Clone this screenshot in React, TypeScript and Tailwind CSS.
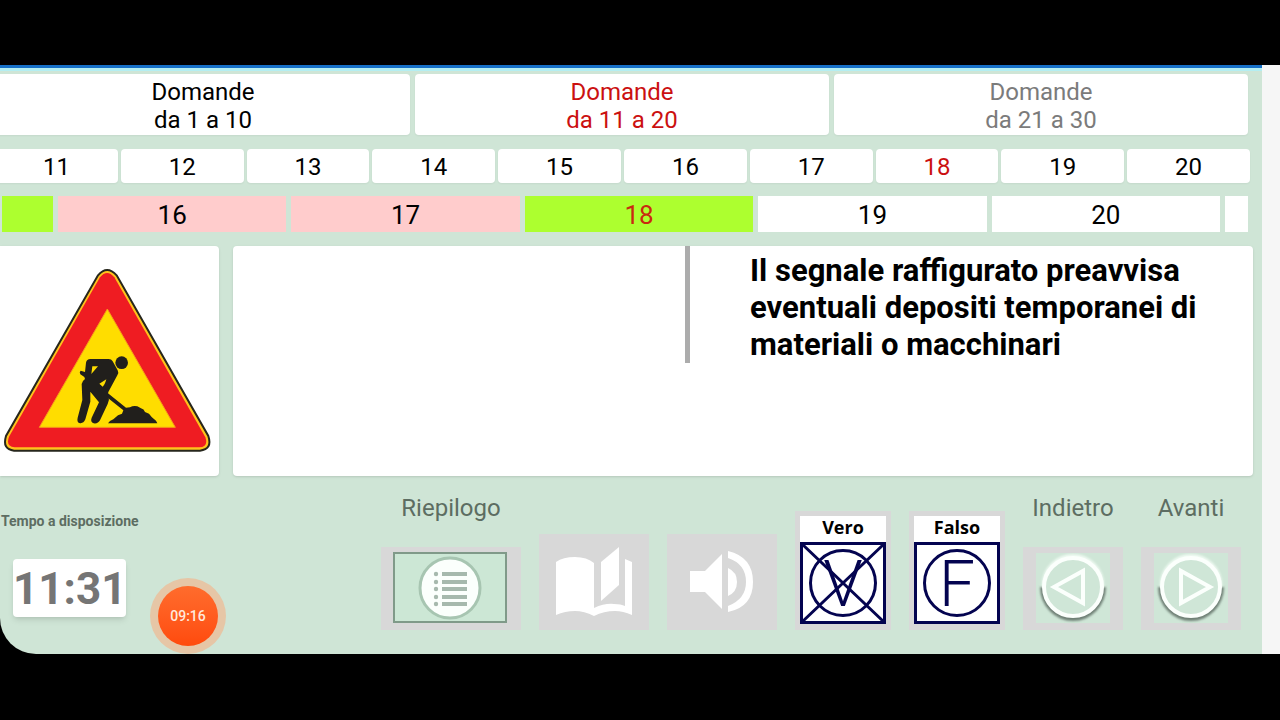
import type { ReactNode } from "react";
import clsx from "clsx";

type Tab = { from: number; to: number; tone: string };
type Strip = { n: number; tone: string };

const tabs: Tab[] = [
  { from: 1, to: 10, tone: "text-black" },
  { from: 11, to: 20, tone: "text-[#cb1010]" },
  { from: 21, to: 30, tone: "text-[#7b7b7b]" },
];

const questions = [11, 12, 13, 14, 15, 16, 17, 18, 19, 20];
const current = 18;

const strip: Strip[] = [
  { n: 16, tone: "bg-[#ffcccc] text-black" },
  { n: 17, tone: "bg-[#ffcccc] text-black" },
  { n: 18, tone: "bg-[#adff2f] text-[#c92a10]" },
  { n: 19, tone: "bg-white text-black" },
  { n: 20, tone: "bg-white text-black" },
];

function RoadWorksSign() {
  return (
    <svg viewBox="12 87 624 552" className="h-[184px] w-[208px]" role="img" aria-label="Lavori">
      <path
        d="M294 106 Q321 74 350 106 L625 588 Q638 628 600 632 H42 Q6 628 18 588 Z"
        fill="#ffc21c"
        stroke="#26261c"
        strokeWidth="6"
      />
      <path d="M300 112 Q321 86 343 112 L616 592 Q626 620 598 622 H44 Q16 620 27 590 Z" fill="#ef1c22" />
      <path d="M322 207 L526 562 H118 Z" fill="#ffdd00" stroke="#f59a1b" strokeWidth="3" />
      <g fill="#211f1c">
        <circle cx="365" cy="368" r="19" />
        <path
          fillRule="evenodd"
          d="M258 368 Q260 357 271 357 H326 Q334 357 338 364 L353 391 Q357 398 352 406 L325 456 Q322 463 326 470 Q329 480 323 492 L300 541 Q294 552 281 550 Q270 546 275 533 L297 487 L271 455 L271 485 L256 538 Q250 552 238 549 Q230 546 233 533 L247 480 L245 432 Q248 421 255 417 L253 411 L241 403 Q237 396 242 392 L255 396 Z M277 379 L274 402 L294 379 Z M298 431 L319 418 Q314 436 308 440 Z"
        />
        <path d="M324 460 L378 503 L390 502 Q400 496 412 499 L423 505 Q432 507 435 516 L447 521 Q454 532 468 542 L472 550 H324 Q328 543 340 538 L354 526 L366 521 L370 511 L320 471 Z" />
      </g>
    </svg>
  );
}

function ListIcon() {
  return (
    <svg viewBox="0 0 64 64" className="h-16 w-16" aria-hidden="true">
      <circle cx="32" cy="32" r="30" fill="#fbfffc" stroke="#a7c5b1" strokeWidth="3" />
      {[17, 25, 32, 40, 47].map((y) => (
        <g key={y} fill="#a6b9ad">
          <circle cx="18" cy={y + 1} r="2.200" />
          <rect x="24" y={y - 1} width="25" height="4" />
        </g>
      ))}
    </svg>
  );
}

function BookIcon() {
  return (
    <svg viewBox="0 0 78 70" className="h-[70px] w-[78px]" fill="#fff" aria-hidden="true">
      <path d="M1 15 Q8 10 20 10 Q32 10 39 16 V61 Q50 56 59 57 Q66 57 70 59 V12 L77 15 V68 Q68 64 60 64 Q49 64 39 69 Q29 64 20 64 Q10 64 1 68 Z" />
      <path d="M46 15 L64 0 V38 L46 54 Z" />
    </svg>
  );
}

function SpeakerIcon() {
  return (
    <svg viewBox="0 0 64 62" className="h-[62px] w-16" fill="#fff" aria-hidden="true">
      <path d="M0 20 H15 L32 3 V58 L15 41 H0 Z" />
      <path d="M38 17 Q47 21 47 31 Q47 41 38 45 Z" />
      <path d="M38 0 Q63 6 63 31 Q63 56 38 61 V55 Q56 48 56 31 Q56 13 38 7 Z" />
    </svg>
  );
}

function ArrowIcon({ back = false }: { back?: boolean }) {
  return (
    <svg viewBox="0 0 74 70" className="h-[70px] w-[74px] bg-[#cfe6d7]" aria-hidden="true">
      <defs>
        <filter id={back ? "soft-b" : "soft-f"} x="-20%" y="-20%" width="140%" height="140%">
          <feGaussianBlur stdDeviation="1.3" />
        </filter>
      </defs>
      <g filter={back ? "url(#soft-b)" : "url(#soft-f)"}>
        <circle cx="37" cy="32" r="29" fill="none" stroke="#effaf2" strokeWidth="4" />
        <path d="M4 34 A33 34 0 0 0 70 34 Z" fill="#6f8076" />
      </g>
      <circle cx="37" cy="34" r="29" fill="#cfe6d7" stroke="#fbfffc" strokeWidth="4" />
      <path
        d={back ? "M18 34 L47 18 V50 Z" : "M56 34 L27 18 V50 Z"}
        fill="none"
        stroke="#fbfffc"
        strokeWidth="4"
      />
    </svg>
  );
}

function AnswerButton({ label, letter, crossed }: { label: string; letter: string; crossed?: boolean }) {
  return (
    <button className="w-24 bg-[#d8d8d8] px-[5px] pt-[5px] pb-[6px]">
      <span className="block bg-white pb-[3px] text-center font-['Open_Sans','Noto_Sans',sans-serif] text-lg leading-[23px] font-bold text-black">
        {label}
      </span>
      <svg viewBox="0 0 86 82" className="block h-[82px] w-[86px] bg-white" aria-hidden="true">
        <g fill="none" stroke="#040450" strokeWidth="3">
          <rect x="1.500" y="1.500" width="83" height="79" />
          <circle cx="43" cy="41" r="32.500" />
          {crossed && <path d="M2 2 L84 80 M84 2 L2 80" />}
        </g>
        <text
          x="43"
          y="64"
          textAnchor="middle"
          fontSize="64"
          fill="#040450"
          className="font-['Roboto',sans-serif] font-light"
        >
          {letter}
        </text>
      </svg>
    </button>
  );
}

function Captioned({ caption, children }: { caption: string; children: ReactNode }) {
  return (
    <label className="flex flex-col items-center gap-[23px] text-2xl leading-8 text-[#5d6d62]">
      {caption}
      {children}
    </label>
  );
}

export default function App() {
  return (
    <div className="min-h-screen bg-black py-[65px] font-['Roboto',sans-serif]">
      <div className="flex">
        <main className="relative min-w-0 flex-1 overflow-hidden rounded-bl-[36px] border-t-3 border-[#1670c8] bg-[#cfe5d6]">
          <div className="h-[3px] bg-[#b4eef2]" />

          <nav className="mt-[3px] mr-[14px] -ml-1 flex gap-[5px]">
            {tabs.map((t) => (
              <button
                key={t.from}
                className={clsx("flex-1 rounded bg-white pt-1 pb-px text-2xl leading-7 shadow-xs", t.tone)}
              >
                Domande
                <br />
                da {t.from} a {t.to}
              </button>
            ))}
          </nav>

          <div className="mt-[14px] mr-3 -ml-[5px] flex gap-[3px]">
            {questions.map((q) => (
              <button
                key={q}
                className={clsx(
                  "flex-1 rounded bg-white pt-[2px] text-2xl leading-8 shadow-xs",
                  q === current ? "text-[#cb1010]" : "text-black",
                )}
              >
                {q}
              </button>
            ))}
          </div>

          <div className="mt-[13px] mr-[14px] ml-[2px] flex gap-[5px]">
            <div className="w-[51px] bg-[#adff2f]" />
            {strip.map((s) => (
              <button key={s.n} className={clsx("flex-1 pt-[2px] text-[26px] leading-[34px]", s.tone)}>
                {s.n}
              </button>
            ))}
            <div className="w-[23px] bg-white" />
          </div>

          <section className="mt-[14px] mr-[9px] flex gap-[14px]">
            <div className="flex w-[219px] items-center rounded-r bg-white py-[23px] pl-1 shadow-sm">
              <RoadWorksSign />
            </div>
            <div className="flex flex-1 items-start rounded bg-white shadow-sm">
              <div className="flex-4" />
              <div className="flex w-[568px] border-l-[5px] border-[#acacac] pl-[60px]">
                <p className="max-w-[460px] pt-[6px] text-[31px] leading-[37px] font-bold text-black">
                  Il segnale raffigurato preavvisa eventuali depositi temporanei di materiali o macchinari
                </p>
              </div>
            </div>
          </section>

          <footer className="flex items-end justify-between pt-4 pr-[21px] pb-6">
            <div className="mb-[13px] flex flex-col gap-7 pl-px">
              <span className="text-sm leading-5 font-bold text-[#5d6d62]">Tempo a disposizione</span>
              <time className="ml-3 w-[113px] rounded bg-white pt-[2px] text-center text-[44px] leading-[56px] font-bold text-[#757575] shadow-md">
                11:31
              </time>
            </div>
            <div className="flex items-end gap-[18px]">
              <Captioned caption="Riepilogo">
                <button className="w-[140px] bg-[#d8d8d8] pt-[5px] pr-[14px] pb-[7px] pl-3">
                  <span className="flex h-[71px] items-center justify-center border-2 border-[#809a89] bg-[#cce7d5]">
                    <ListIcon />
                  </span>
                </button>
              </Captioned>
              <button aria-label="Manuale" className="flex h-24 w-[110px] items-center justify-center bg-[#d8d8d8]">
                <BookIcon />
              </button>
              <button aria-label="Audio" className="flex h-24 w-[110px] items-center justify-center bg-[#d8d8d8]">
                <SpeakerIcon />
              </button>
              <AnswerButton label="Vero" letter="V" crossed />
              <AnswerButton label="Falso" letter="F" />
              <Captioned caption="Indietro">
                <button className="flex w-[100px] justify-center bg-[#d8d8d8] pt-[6px] pb-[7px]">
                  <ArrowIcon back />
                </button>
              </Captioned>
              <Captioned caption="Avanti">
                <button className="flex w-[100px] justify-center bg-[#d8d8d8] pt-[6px] pb-[7px]">
                  <ArrowIcon />
                </button>
              </Captioned>
            </div>
          </footer>

          {/* floating recorder bubble */}
          <div className="absolute bottom-0 left-[150px] flex size-[76px] items-center justify-center rounded-full bg-[#e6c6a6]">
            <div className="flex size-[60px] items-center justify-center rounded-full bg-linear-to-b from-[#ff6c2c] to-[#ff4a0c] text-sm font-medium text-[#ffe9dc]">
              09:16
            </div>
          </div>
        </main>
        <aside className="w-[18px] bg-[#f6f6f6]" />
      </div>
    </div>
  );
}
